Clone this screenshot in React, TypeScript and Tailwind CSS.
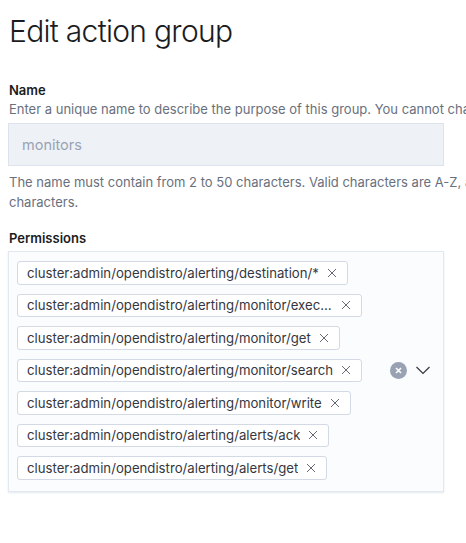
import React from "react";

const perms = [
  "cluster:admin/opendistro/alerting/destination/*",
  "cluster:admin/opendistro/alerting/monitor/execute",
  "cluster:admin/opendistro/alerting/monitor/get",
  "cluster:admin/opendistro/alerting/monitor/search",
  "cluster:admin/opendistro/alerting/monitor/write",
  "cluster:admin/opendistro/alerting/alerts/ack",
  "cluster:admin/opendistro/alerting/alerts/get",
];

function Cross() {
  return (
    <svg width="10" height="10" viewBox="0 0 10 10" className="shrink-0">
      <path d="M1 1L9 9M9 1L1 9" stroke="#535966" strokeWidth="0.9" fill="none" />
    </svg>
  );
}

function Pill({ text }: { text: string }) {
  return (
    <div className="flex h-[23.5px] max-w-[345px] items-center gap-[8px] rounded-[3px] border border-[#d3dae6] bg-white pl-[9px] pr-[10px]">
      <span className="truncate text-[13.2px] leading-[20px] text-[#343741]">{text}</span>
      <Cross />
    </div>
  );
}

export default function App() {
  return (
    <div className="h-[543px] w-[466px] overflow-hidden bg-white font-['Inter',sans-serif]">
      <div className="w-[800px] pl-[9px] pt-[13px]">
        <h1 className="text-[30px] font-light leading-[36px] tracking-[-0.7px] text-[#1a1c21]">
          Edit action group
        </h1>
        <div className="mt-[33px]">
          <div className="text-[13px] font-semibold leading-[16px] text-[#1a1c21]">Name</div>
          <div className="mt-[3px] text-[13px] leading-[16px] text-[#69707d]">
            Enter a unique name to describe the purpose of this group. You cannot change the name after creation.
          </div>
          <div className="ml-[-1px] mt-[6px] flex h-[43px] w-[436px] items-center border border-[#dde3ec] bg-[#eef2f7] px-[13px] text-[14.5px] text-[#98a2b3]">
            monitors
          </div>
          <div className="mt-[6px] w-[770px] text-[13px] leading-[20px] text-[#69707d]">
            The name must contain from 2 to 50 characters. Valid characters are A-Z, a-z, 0-9, (_)underscore, (-) hyphen and unicode characters.
          </div>
        </div>
        <div className="mt-[18px]">
          <div className="text-[13px] font-semibold leading-[16px] text-[#1a1c21]">Permissions</div>
          <div className="ml-[-1px] mt-[5px] flex w-[436px] items-center border border-[#e3e8f0] bg-[#fbfcfd] pb-[11px] pt-[9px] pl-[8px] pr-[12px] shadow-[0_1px_2px_rgba(152,162,179,0.25)]">
            <div className="flex flex-1 flex-col items-start gap-[9px]">
              {perms.map((p) => (
                <Pill key={p} text={p} />
              ))}
            </div>
            <div className="flex items-center gap-[8px]">
              <div className="flex h-[17px] w-[17px] items-center justify-center rounded-full bg-[#98a2b3]">
                <svg width="7" height="7" viewBox="0 0 7 7">
                  <path d="M1 1L6 6M6 1L1 6" stroke="white" strokeWidth="1.6" fill="none" />
                </svg>
              </div>
              <svg width="16" height="10" viewBox="0 0 16 10">
                <path d="M1.5 2L8 8.5L14.5 2" stroke="#343741" strokeWidth="1.2" fill="none" />
              </svg>
            </div>
          </div>
        </div>
      </div>
    </div>
  );
}
